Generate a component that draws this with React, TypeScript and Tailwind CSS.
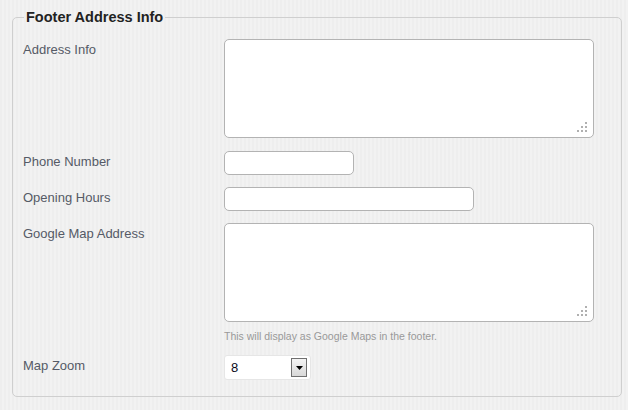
const font = { fontFamily: '"Liberation Sans", Arial, sans-serif' };

function Row({ label, children, className = '' }: { label: string; children: React.ReactNode; className?: string }) {
  return (
    <div className={`flex ${className}`}>
      <label className="w-[201px] shrink-0 pt-[3px] text-[13px] leading-[16px] text-[#555a66]">{label}</label>
      <div>{children}</div>
    </div>
  );
}

function Grip() {
  return (
    <svg width="12" height="12" viewBox="0 0 12 12" className="absolute bottom-[4px] right-[5px]">
      {[
        [9, 1], [5, 5], [9, 5], [1, 9], [5, 9], [9, 9],
      ].map(([x, y], i) => (
        <rect key={i} x={x} y={y} width="2" height="2" fill="#b0b0b0" />
      ))}
    </svg>
  );
}

function Area() {
  return (
    <div className="relative h-[99px] w-[370px] rounded-[5px] border border-[#b3b3b3] bg-white">
      <Grip />
    </div>
  );
}

export default function App() {
  return (
    <div
      style={font}
      className="h-[410px] w-[628px] overflow-hidden bg-[#efefef] bg-[repeating-linear-gradient(90deg,#eeeeee_0px,#eeeeee_2px,#f2f2f2_2px,#f2f2f2_4px)] pl-[12px] pt-[10px]"
    >
      <fieldset className="w-[610px] rounded-[5px] border border-[#cfcfcf] pb-[16px] pl-[10px] pr-0 pt-[16px]">
        <legend className="ml-[1px] px-[2px] text-[14.5px] font-bold leading-[14px] text-[#222]">Footer Address Info</legend>
        <div className="-mt-[1px] flex flex-col">
          <Row label="Address Info" className="mb-[13px]">
            <Area />
          </Row>
          <Row label="Phone Number" className="mb-[12px]">
            <div className="h-[24px] w-[130px] rounded-[5px] border border-[#b3b3b3] bg-white" />
          </Row>
          <Row label="Opening Hours" className="mb-[12px]">
            <div className="h-[24px] w-[250px] rounded-[5px] border border-[#b3b3b3] bg-white" />
          </Row>
          <Row label="Google Map Address" className="mb-[8px]">
            <Area />
            <p className="mt-[8px] text-[10.5px] leading-[12px] text-[#999]">This will display as Google Maps in the footer.</p>
          </Row>
          <div className="mt-[11px] flex">
            <label className="-mt-[3px] w-[201px] shrink-0 text-[13px] leading-[16px] text-[#555a66]">Map Zoom</label>
            <div className="-mt-[6px] flex h-[25px] w-[87px] items-center justify-between rounded-[3px] border border-[#e6e6e6] bg-white pl-[6px] pr-[3px]">
              <span className="text-[13px] leading-[16px] text-[#0a0a1a]">8</span>
              <span className="flex h-[19px] w-[16px] items-center justify-center border border-[#707070] bg-[linear-gradient(#f4f4f4,#d8d8d8)]">
                <svg width="7" height="4" viewBox="0 0 7 4">
                  <path d="M0 0H7L3.5 4Z" fill="#000" />
                </svg>
              </span>
            </div>
          </div>
        </div>
      </fieldset>
    </div>
  );
}
